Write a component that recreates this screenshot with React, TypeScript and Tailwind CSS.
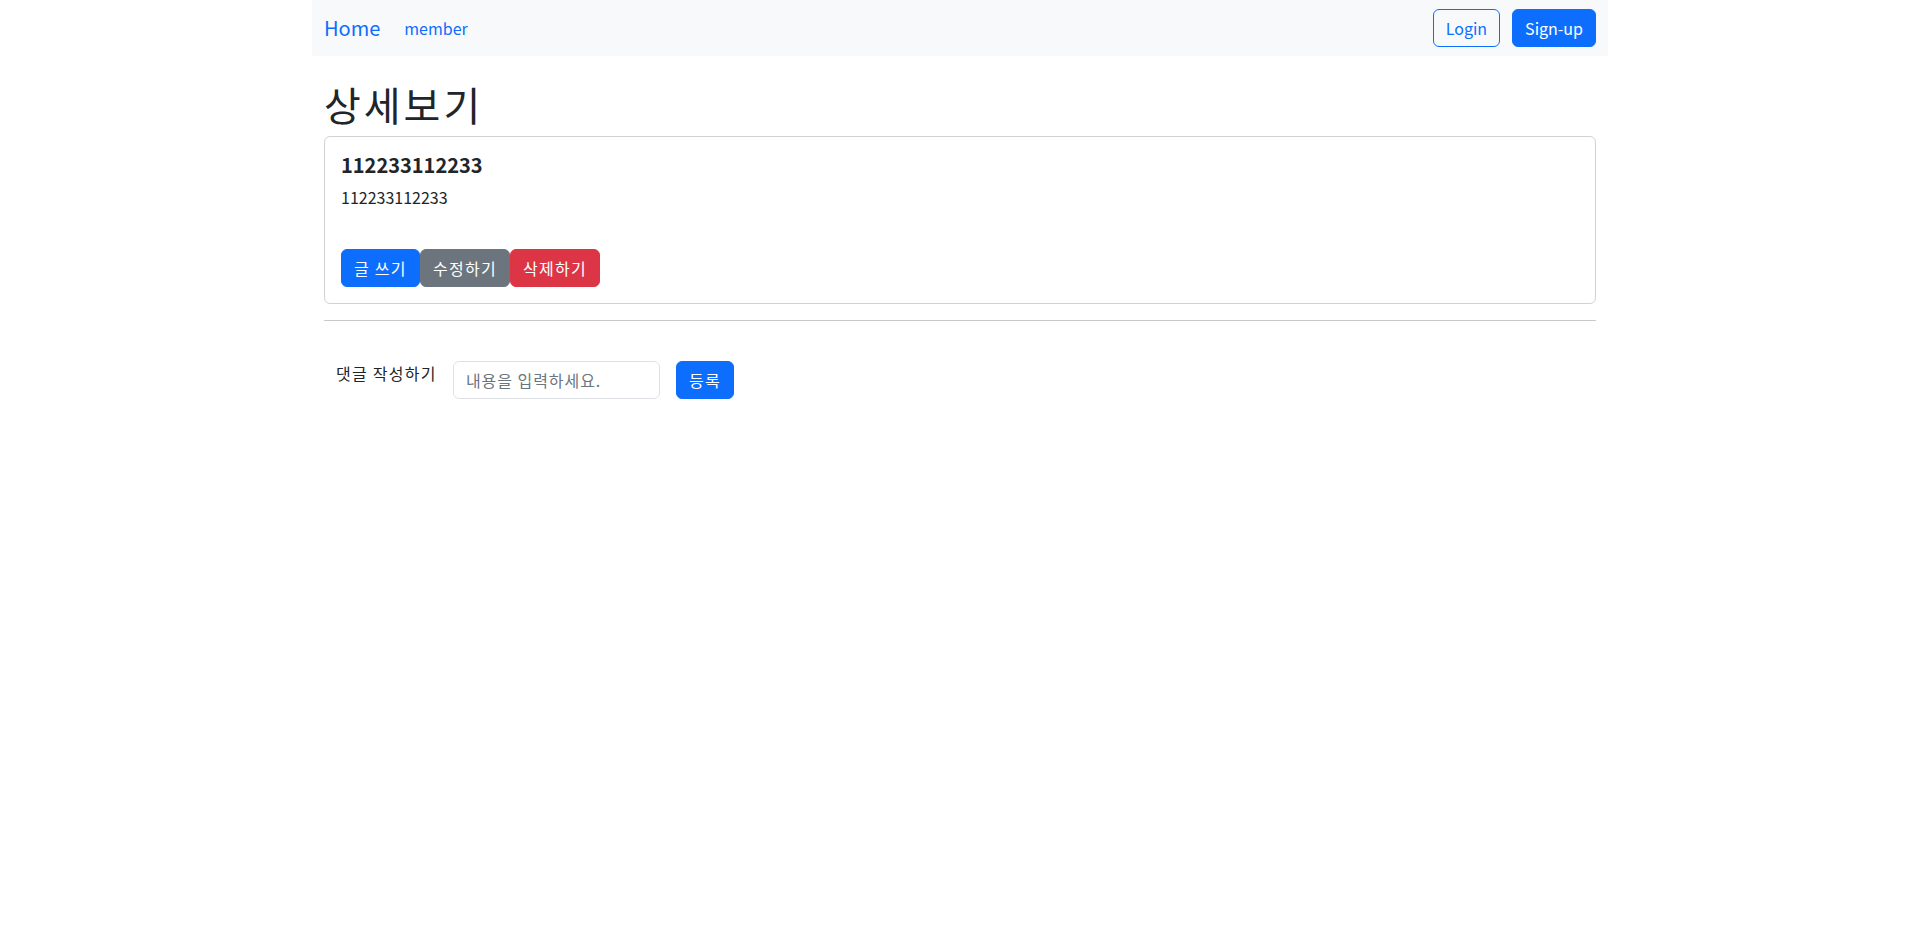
import React from "react";

const FONT = "font-['Noto_Sans_CJK_KR','Noto_Sans',sans-serif]";

function NavBar() {
  return (
    <nav className="flex h-14 items-center bg-[#f8f9fa] px-3">
      <a href="#" className="mr-4 py-[5px] text-xl leading-[30px] text-[#0d6efd]">Home</a>
      <a href="#" className="px-2 py-2 text-base leading-6 text-[#0d6efd]">member</a>
      <div className="flex-1" />
      <button className="h-[38px] rounded-md border border-[#0d6efd] px-3 text-base leading-6 text-[#0d6efd]">Login</button>
      <button className="ml-3 h-[38px] rounded-md border border-[#0d6efd] bg-[#0d6efd] px-3 text-base leading-6 text-white">Sign-up</button>
    </nav>
  );
}

function PostCard() {
  return (
    <div className="rounded-md border border-[#d2d2d2] bg-white p-4">
      <h5 className="mb-2 text-xl font-bold leading-6">112233112233</h5>
      <p className="mb-4 leading-6">112233112233</p>
      <div className="h-6" />
      <div className="flex tracking-[0.08em]">
        <button className="h-[38px] rounded-md border border-[#0d6efd] bg-[#0d6efd] px-3 text-white">글 쓰기</button>
        <button className="h-[38px] rounded-md border border-[#6c757d] bg-[#6c757d] px-3 text-white">수정하기</button>
        <button className="h-[38px] rounded-md border border-[#dc3545] bg-[#dc3545] px-3 text-white">삭제하기</button>
      </div>
    </div>
  );
}

function CommentForm() {
  return (
    <div className="flex items-start pt-6 tracking-[0.08em]">
      <label className="ml-3 leading-6">댓글 작성하기</label>
      <input
        type="text"
        placeholder="내용을 입력하세요."
        className="ml-4 h-[38px] w-[207px] rounded-md border border-[#dee2e6] px-3 text-base leading-6 tracking-[0.06em] outline-none placeholder:text-[#6c757d]"
      />
      <button className="ml-4 h-[38px] rounded-md border border-[#0d6efd] bg-[#0d6efd] px-3 text-white">등록</button>
    </div>
  );
}

export default function App() {
  return (
    <div className={`${FONT} min-h-screen bg-white text-base leading-6 text-[#212529]`}>
      <div className="mx-auto w-[1320px] px-3">
        <NavBar />
        <div className="px-3">
          <h1 className="mb-2 mt-6 text-[40px] font-normal leading-[48px] tracking-[0.075em]">상세보기</h1>
          <PostCard />
          <hr className="my-4 border-0 border-t border-[#c8c9ca]" />
          <CommentForm />
        </div>
      </div>
    </div>
  );
}
